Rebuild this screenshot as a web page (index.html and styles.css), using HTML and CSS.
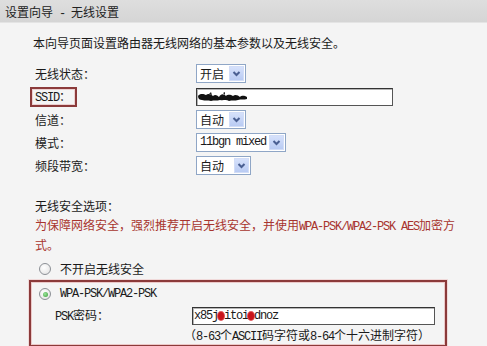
FILE: index.html
```html
<!DOCTYPE html>
<html>
<head>
<meta charset="utf-8">
<link rel="stylesheet" href="styles.css">
</head>
<body>
<div class="hdr">设置向导<span class="en"> - </span>无线设置</div>
<p class="intro">本向导页面设置路由器无线网络的基本参数以及无线安全。</p>
<div class="form">
  <div class="lbl">无线状态：</div>
  <div class="ctl"><div class="sel w50"><span class="opt">开启</span><span class="btn"><svg width="13" height="13" viewBox="0 0 13 13"><path d="M3.5 5 L6.5 8 L9.5 5" fill="none" stroke="#4a5f92" stroke-width="2"/></svg></span></div></div>
  <div class="lbl"><span class="mark"><span class="en">SSID</span>：</span></div>
  <div class="ctl"><div class="inp ssid"><svg width="52" height="12" viewBox="0 0 52 12"><path d="M1 5 C3 2 7 3 9 4 C11 2 14 3 16 5 C18 3 20 4 22 6 C24 2 27 3 29 5 C31 3 34 4 36 5 C38 3 41 4 43 6 C45 4 48 5 50 6 L50 8 C47 9 44 8 41 9 C38 10 35 9 32 10 C29 8 26 10 23 9 C20 10 17 9 14 10 C11 9 8 10 5 9 C3 9 1 8 1 5 Z" fill="#111"/><path d="M12 3 L14 1 L15 4 Z M26 2 L28 1 L28 4 Z" fill="#222"/></svg></div></div>
  <div class="lbl">信道：</div>
  <div class="ctl"><div class="sel w50"><span class="opt">自动</span><span class="btn"><svg width="13" height="13" viewBox="0 0 13 13"><path d="M3.5 5 L6.5 8 L9.5 5" fill="none" stroke="#4a5f92" stroke-width="2"/></svg></span></div></div>
  <div class="lbl">模式：</div>
  <div class="ctl"><div class="sel w90"><span class="opt en">11bgn mixed</span><span class="btn"><svg width="13" height="13" viewBox="0 0 13 13"><path d="M3.5 5 L6.5 8 L9.5 5" fill="none" stroke="#4a5f92" stroke-width="2"/></svg></span></div></div>
  <div class="lbl">频段带宽：</div>
  <div class="ctl"><div class="sel w55"><span class="opt">自动</span><span class="btn"><svg width="13" height="13" viewBox="0 0 13 13"><path d="M3.5 5 L6.5 8 L9.5 5" fill="none" stroke="#4a5f92" stroke-width="2"/></svg></span></div></div>
</div>
<p class="sec">无线安全选项：</p>
<p class="warn">为保障网络安全，强烈推荐开启无线安全，并使用<span class="en">WPA-PSK/WPA2-PSK AES</span>加密方<br>式。</p>
<div class="radio-row"><span class="radio"></span>不开启无线安全</div>
<div class="box">
  <div class="radio-row in"><span class="radio on"></span><span class="en">WPA-PSK/WPA2-PSK</span></div>
  <div class="psk-row">
    <div class="psk-lbl"><span class="en">PSK</span>密码：</div>
    <div class="inp psk"><span class="en">x85j</span><span class="dot"></span><span class="en">itoi</span><span class="dot"></span><span class="en">dnoz</span></div>
  </div>
  <div class="hint">（<span class="en">8-63</span>个<span class="en">ASCII</span>码字符或<span class="en">8-64</span>个十六进制字符）</div>
</div>
</body>
</html>
```
FILE: styles.css
```css
html, body {
  margin: 0;
  padding: 0;
}
body {
  background: #f4f4f4;
  font-family: "Noto Sans CJK SC", "Liberation Sans", sans-serif;
  font-size: 12px;
  color: #1a1a1a;
  width: 487px;
  height: 346px;
  overflow: hidden;
}
.en {
  font-family: "Liberation Mono", "DejaVu Sans Mono", monospace;
  font-size: 12px;
  letter-spacing: -1.2px;
}
.hdr {
  height: 23px;
  line-height: 23px;
  padding-left: 5px;
  background: linear-gradient(#dedede, #d5d5d5);
  border-bottom: 1px solid #e4e4e4;
  box-sizing: border-box;
  color: #222;
  font-size: 12px;
  white-space: pre;
}
.intro {
  margin: 12px 0 0 33px;
  line-height: 16px;
}
.form {
  display: grid;
  grid-template-columns: 161px 1fr;
  grid-auto-rows: 23px;
  align-items: center;
  margin: 11px 0 0 35px;
}
.lbl {
  line-height: 16px;
}
.mark {
  display: inline-block;
  margin-left: -5px;
  padding: 0 4px 0 3px;
  line-height: 14px;
  border: 2px solid #8b3a3a;
  box-shadow: inset 0 0 0 1px #ecd0d0;
}
.ctl {
  display: flex;
}
.sel {
  height: 19px;
  box-sizing: border-box;
  border: 1px solid #8fa6c6;
  background: #fff;
  display: flex;
  align-items: center;
  justify-content: space-between;
  padding-left: 3px;
}
.w50 { width: 50px; }
.w55 { width: 55px; }
.w90 { width: 90px; }
.opt {
  line-height: 15px;
}
.btn {
  width: 15px;
  height: 15px;
  margin-right: 1px;
  box-sizing: border-box;
  border: 1px solid #d2ddf7;
  background: linear-gradient(#d6e1fb, #b9cbf3);
  display: flex;
  align-items: center;
  justify-content: center;
}
.inp {
  box-sizing: border-box;
  background: #fff;
  border: 1px solid #555;
  border-top-color: #333;
  border-left-color: #3a3a3a;
  box-shadow: inset 1px 1px 0 #b5b5b5;
  display: flex;
  align-items: center;
}
.ssid {
  width: 197px;
  height: 18px;
  padding-left: 0;
}
.sec {
  margin: 21px 0 0 35px;
  line-height: 16px;
}
.warn {
  margin: 2px 0 0 35px;
  line-height: 18px;
  color: #a8342e;
  white-space: nowrap;
}
.radio-row {
  margin: 7px 0 0 0;
  padding-left: 39px;
  display: flex;
  align-items: center;
  height: 16px;
  line-height: 16px;
}
.radio {
  width: 12px;
  height: 12px;
  box-sizing: border-box;
  border: 1px solid #8c9096;
  border-radius: 50%;
  background: radial-gradient(circle at 40% 35%, #ffffff, #e0e0e0);
  margin-right: 9px;
  display: flex;
  align-items: center;
  justify-content: center;
}
.radio.on::after {
  content: "";
  width: 5px;
  height: 5px;
  border-radius: 50%;
  background: radial-gradient(circle at 40% 40%, #9be59b, #3a9c3a);
}
.box {
  margin: 3px 0 0 29px;
  width: 418px;
  box-sizing: border-box;
  border: 2px solid #8b3a3a;
  box-shadow: inset 0 0 0 1px #ecc9c9, 0 0 0 1px #f0dada;
  padding: 4px 0 1px 8px;
  height: 67px;
}
.radio-row.in {
  margin: 0;
  padding-left: 0;
}
.psk-row {
  display: flex;
  align-items: center;
  margin-top: 5px;
}
.psk-lbl {
  width: 137px;
  margin-left: 16px;
  line-height: 16px;
}
.psk {
  width: 243px;
  height: 18px;
  padding-left: 1px;
}
.dot {
  display: inline-block;
  width: 6px;
  height: 8px;
  border-radius: 50%;
  background: #c8141a;
  box-shadow: 0 0 0 1px #e0575a;
}
.hint {
  margin: 2px 0 0 145px;
  line-height: 16px;
  white-space: nowrap;
}
```
